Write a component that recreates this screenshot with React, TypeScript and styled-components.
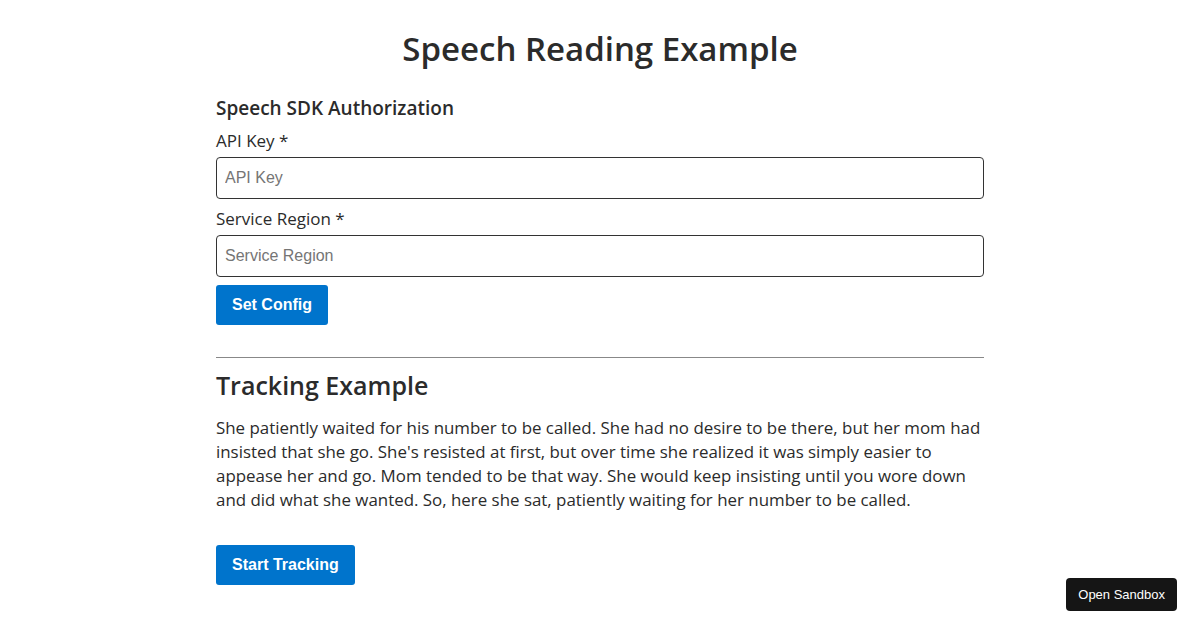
import React from "react";
import styled, { createGlobalStyle } from "styled-components";

const GlobalStyle = createGlobalStyle`
  html, body { margin: 0; padding: 0; background: #fff; }
  body { font-family: "Open Sans", sans-serif; color: #2b2b2b; }
  * { box-sizing: border-box; }
`;

const Page = styled.div`
  width: 1200px;
  height: 630px;
  position: relative;
  overflow: hidden;
`;

const Main = styled.main`
  width: 768px;
  margin: 0 auto;
  display: flex;
  flex-direction: column;
`;

const Title = styled.h1`
  margin: 26px 0 0;
  text-align: center;
  font-size: 33px;
  font-weight: 600;
  line-height: 46px;
  color: #2b2b2b;
`;

const SectionTitle = styled.h2<{ $size: number; $lh: number }>`
  margin: 0;
  font-size: ${(p) => p.$size}px;
  line-height: ${(p) => p.$lh}px;
  font-weight: 600;
  color: #2b2b2b;
`;

const Field = styled.div`
  display: flex;
  flex-direction: column;
  gap: 4px;
`;

const Label = styled.label`
  font-size: 17px;
  line-height: 24px;
  color: #2b2b2b;
  display: block;
`;

const Input = styled.input`
  width: 100%;
  height: 42px;
  border: 1px solid #333;
  border-radius: 4px;
  padding: 0 8px;
  font-family: "Liberation Sans", Arial, sans-serif;
  font-size: 16px;
  color: #333;
  &::placeholder { color: #757575; }
`;

const Button = styled.button`
  align-self: flex-start;
  height: 40px;
  padding: 0 16px;
  border: none;
  border-radius: 3px;
  background: #0074cc;
  color: #fff;
  font-family: "Liberation Sans", Arial, sans-serif;
  font-weight: 700;
  font-size: 16px;
`;

const Divider = styled.hr`
  width: 100%;
  margin: 0;
  border: none;
  border-top: 1px solid #888;
`;

const Paragraph = styled.p`
  margin: 0;
  font-size: 16.9px;
  line-height: 24px;
  color: #2b2b2b;
`;

const Badge = styled.div`
  position: absolute;
  right: 23px;
  bottom: 19px;
  height: 33px;
  padding: 0 12px;
  display: flex;
  align-items: center;
  background: #151515;
  border-radius: 4px;
  color: #fff;
  font-family: "Liberation Sans", Arial, sans-serif;
  font-size: 13px;
`;

const Stack = styled.div<{ $gap: number; $top: number }>`
  display: flex;
  flex-direction: column;
  gap: ${(p) => p.$gap}px;
  margin-top: ${(p) => p.$top}px;
`;

export default function App() {
  return (
    <Page>
      <GlobalStyle />
      <Main>
        <Title>Speech Reading Example</Title>
        <Stack $gap={8} $top={24}>
          <SectionTitle $size={19} $lh={25}>Speech SDK Authorization</SectionTitle>
          <Field>
            <Label htmlFor="key">API Key *</Label>
            <Input id="key" placeholder="API Key" />
          </Field>
          <Field>
            <Label htmlFor="region">Service Region *</Label>
            <Input id="region" placeholder="Service Region" />
          </Field>
          <Button>Set Config</Button>
        </Stack>
        <Stack $gap={0} $top={32}>
          <Divider />
          <Stack $gap={15} $top={11}>
            <SectionTitle $size={25} $lh={32}>Tracking Example</SectionTitle>
            <Paragraph>
              She patiently waited for his number to be called. She had no desire to be there, but her mom had
              insisted that she go. She's resisted at first, but over time she realized it was simply easier to
              appease her and go. Mom tended to be that way. She would keep insisting until you wore down
              and did what she wanted. So, here she sat, patiently waiting for her number to be called.
            </Paragraph>
          </Stack>
        </Stack>
        <Stack $gap={0} $top={33}>
          <Button>Start Tracking</Button>
        </Stack>
      </Main>
      <Badge>Open Sandbox</Badge>
    </Page>
  );
}
